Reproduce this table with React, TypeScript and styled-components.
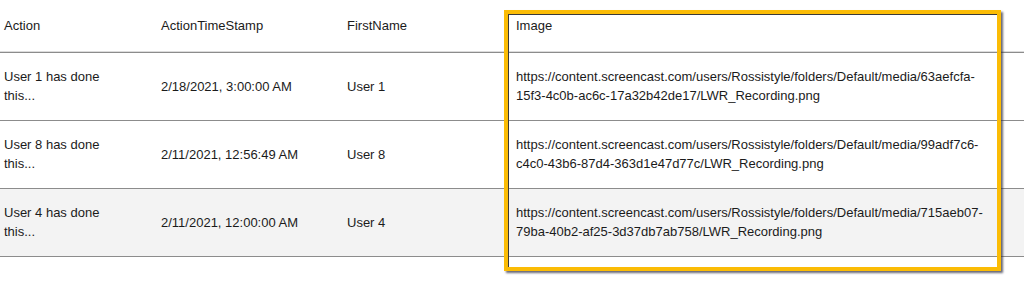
import styled, { createGlobalStyle } from "styled-components";

const GlobalStyle = createGlobalStyle`
  body {
    margin: 0;
    background: #ffffff;
    font-family: "Liberation Sans", Arial, sans-serif;
    color: #1b1b1b;
  }
`;

const Page = styled.div`
  position: relative;
  width: 1024px;
  height: 282px;
  overflow: hidden;
  background: #ffffff;
`;

const Table = styled.table`
  width: 1024px;
  border-collapse: collapse;
  table-layout: fixed;
  font-size: 13px;
  line-height: 19px;

  th,
  td {
    box-sizing: border-box;
  }
`;

const HeadCell = styled.th<{ $w?: number; $pad?: number }>`
  width: ${(p) => (p.$w ? `${p.$w}px` : "auto")};
  height: 52px;
  padding: 0 ${(p) => p.$pad ?? 8}px 0 4px;
  text-align: left;
  font-weight: normal;
  vertical-align: middle;
  border-bottom: 1px solid #8c8c8c;
  box-shadow: inset 0 -1px 0 #dcdcdc;
`;

const Row = styled.tr<{ $shaded?: boolean }>`
  background: ${(p) => (p.$shaded ? "#f3f3f3" : "#ffffff")};
`;

const Cell = styled.td<{ $pad?: number }>`
  height: 68px;
  padding: 0 ${(p) => p.$pad ?? 8}px 0 4px;
  vertical-align: middle;
  border-bottom: 1px solid #8c8c8c;
  word-wrap: break-word;
`;

// yellow annotation frame drawn over the Image column
const Highlight = styled.div`
  position: absolute;
  left: 504px;
  top: 10px;
  width: 489px;
  height: 253px;
  border: 4px solid #fbbc05;
  box-shadow: inset 1px 1px 0 #3a3a3a, 2px 2px 2px rgba(40, 40, 60, 0.7);
  pointer-events: none;
`;

const rows = [
  {
    action: "User 1 has done this...",
    stamp: "2/18/2021, 3:00:00 AM",
    name: "User 1",
    image:
      "https://content.screencast.com/users/Rossistyle/folders/Default/media/63aefcfa-15f3-4c0b-ac6c-17a32b42de17/LWR_Recording.png",
  },
  {
    action: "User 8 has done this...",
    stamp: "2/11/2021, 12:56:49 AM",
    name: "User 8",
    image:
      "https://content.screencast.com/users/Rossistyle/folders/Default/media/99adf7c6-c4c0-43b6-87d4-363d1e47d77c/LWR_Recording.png",
  },
  {
    action: "User 4 has done this...",
    stamp: "2/11/2021, 12:00:00 AM",
    name: "User 4",
    image:
      "https://content.screencast.com/users/Rossistyle/folders/Default/media/715aeb07-79ba-40b2-af25-3d37db7ab758/LWR_Recording.png",
  },
];

const App = () => {
  return (
    <Page>
      <GlobalStyle />
      <Table>
        <thead>
          <tr>
            <HeadCell $w={157} $pad={40}>Action</HeadCell>
            <HeadCell $w={186}>ActionTimeStamp</HeadCell>
            <HeadCell $w={169}>FirstName</HeadCell>
            <HeadCell $pad={20}>Image</HeadCell>
          </tr>
        </thead>
        <tbody>
          {rows.map((r, i) => (
            <Row key={r.name} $shaded={i === 2}>
              <Cell $pad={40}>{r.action}</Cell>
              <Cell>{r.stamp}</Cell>
              <Cell>{r.name}</Cell>
              <Cell $pad={20}>{r.image}</Cell>
            </Row>
          ))}
        </tbody>
      </Table>
      <Highlight />
    </Page>
  );
};
export default App;
